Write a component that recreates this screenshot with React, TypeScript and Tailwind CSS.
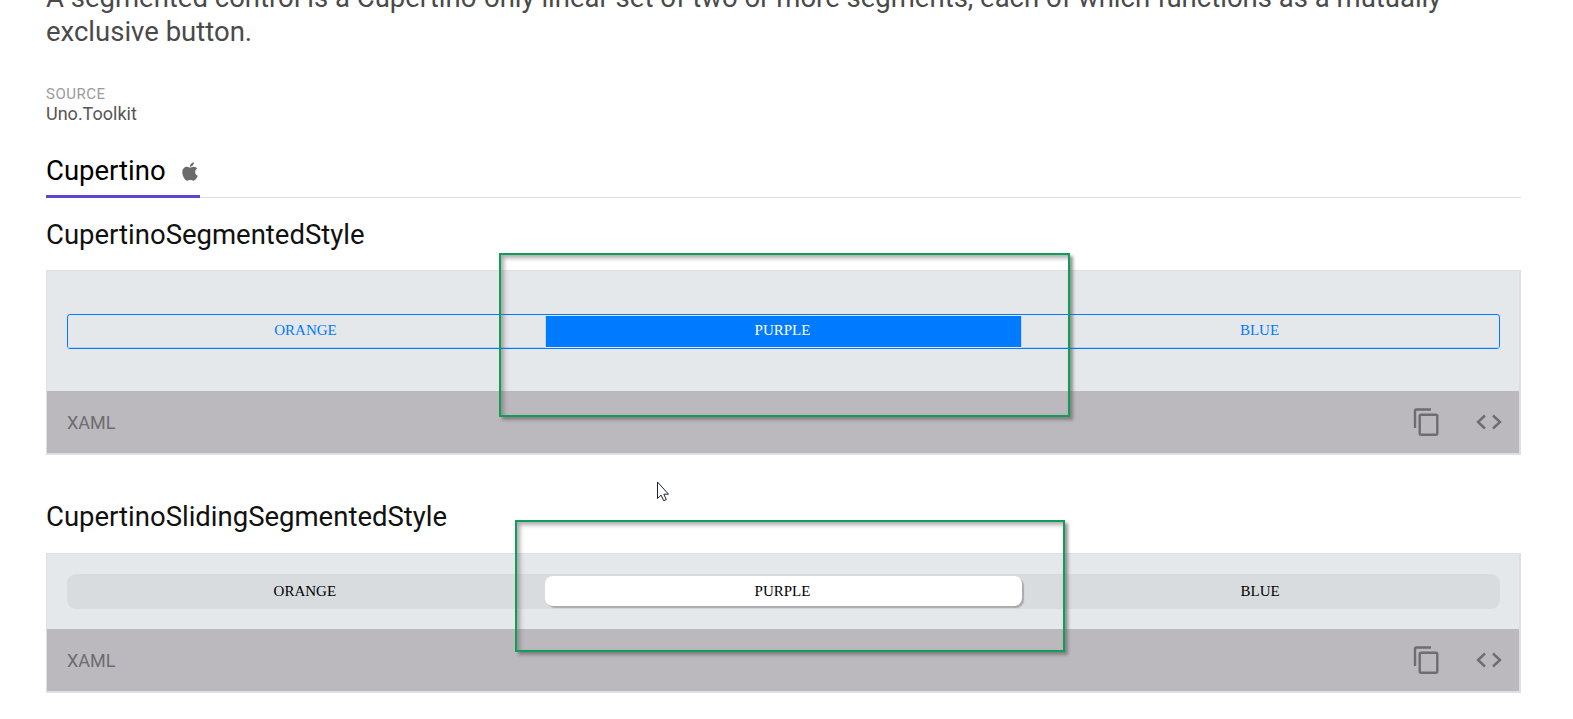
import { FaApple } from "react-icons/fa";

/* ── Types ── */

interface SampleCardProps {
  readonly variant: "segmented" | "sliding";
}

const SEGMENTS = ["ORANGE", "PURPLE", "BLUE"];

/* ── Icons ── */

function CopyIcon() {
  return (
    <svg width="26" height="28" viewBox="0 0 26 28" fill="none" stroke="#6e6b71" strokeWidth="2.4">
      <path d="M2 20V3a1.5 1.5 0 0 1 1.5-1.5H18" />
      <rect x="6.7" y="6.7" width="17.6" height="20" rx="1.5" />
    </svg>
  );
}

function CodeIcon() {
  return (
    <svg width="26" height="16" viewBox="0 0 26 16" fill="none" stroke="#6e6b71" strokeWidth="2.4">
      <path d="M9 1.5 2 8l7 6.5M17 1.5 24 8l-7 6.5" />
    </svg>
  );
}

function CursorIcon() {
  return (
    <svg width="14" height="21" viewBox="0 0 14 21" fill="#ffffff" stroke="#1f2430" strokeWidth="1">
      <path d="M1.5 1v16.5l3.6-3.4 2.6 5.6 2.6-1.1-2.5-5.4h4.7z" />
    </svg>
  );
}

/* ── Sample cards ── */

function SampleCard({ variant }: SampleCardProps) {
  const isSliding = variant === "sliding";

  return (
    <div className="border border-r-2 border-b-2 border-[#dddfe1]">
      <div className={isSliding ? "bg-[#e5e8eb] pt-5 pr-[19px] pb-5 pl-5" : "bg-[#e5e8eb] pt-[43px] pr-[19px] pb-[42px] pl-5"}>
        {isSliding ? (
          <div className="grid h-[35px] grid-cols-3 rounded-[9px] bg-[#d9dcdf] pt-[2px] font-['Liberation_Serif',serif] text-[15px] text-black">
            {SEGMENTS.map((segment) => (
              <div
                key={segment}
                className={
                  segment === "PURPLE"
                    ? "flex h-[30px] items-center justify-center rounded-[8px] bg-white pr-[2px] shadow-[2px_2px_1px_#a9abae]"
                    : "flex h-[30px] items-center justify-center pr-[2px]"
                }
              >
                {segment}
              </div>
            ))}
          </div>
        ) : (
          <div className="grid h-[35px] grid-cols-3 rounded-[3px] border border-[#007aff] font-['Liberation_Serif',serif] text-[15px] text-[#007aff]">
            {SEGMENTS.map((segment) => (
              <div
                key={segment}
                className={
                  segment === "PURPLE"
                    ? "my-px flex items-center justify-center border-x border-[#c3d4ea] bg-[#007aff] pr-[2px] pb-[2px] text-white"
                    : "flex items-center justify-center border-b border-[#b5d3f5] pr-[2px] pb-[2px]"
                }
              >
                {segment}
              </div>
            ))}
          </div>
        )}
      </div>
      <div className="flex h-[62px] items-center justify-between bg-[#bcb9be] pr-[17px] pl-5">
        <span className="text-[18px] text-[#6e6b71]">XAML</span>
        <div className="flex items-center gap-[37px]">
          <CopyIcon />
          <CodeIcon />
        </div>
      </div>
    </div>
  );
}

/* ── Page ── */

export default function App() {
  return (
    <div className="relative h-[719px] overflow-hidden bg-white pr-[52px] pl-[46px] font-['Roboto',sans-serif]">
      <p className="-mt-[19px] text-[27.5px] leading-[34px] text-[#4a4a4a]">
        A segmented control is a Cupertino-only linear set of two or more segments, each of which functions as a mutually exclusive button.
      </p>

      <div className="mt-[36px] text-[15px] leading-[18px] tracking-[0.5px] text-[#9b9b9b]">SOURCE</div>
      <div className="text-[18px] leading-[22px] text-[#555555]">Uno.Toolkit</div>

      {/* Tabs */}
      <div className="mt-[22px] border-b border-[#e0e0e0]">
        <div className="-mb-px flex h-[51px] w-[154px] items-center gap-[15px] border-b-[3px] border-[#5b48d0]">
          <span className="text-[27.5px] text-black">Cupertino</span>
          <FaApple className="h-[21px] w-[18px] text-[#6b6b6b]" />
        </div>
      </div>

      <h2 className="mt-[19px] mb-[17px] text-[27.5px] leading-[36px] font-normal text-[#111111]">CupertinoSegmentedStyle</h2>
      <SampleCard variant="segmented" />

      <h2 className="mt-[44px] mb-[18px] text-[27.5px] leading-[36px] font-normal text-[#111111]">CupertinoSlidingSegmentedStyle</h2>
      <SampleCard variant="sliding" />

      {/* Annotation boxes drawn over the screenshot */}
      <div className="absolute top-[253px] left-[499px] h-[164px] w-[571px] border-2 border-[#0f9d58] shadow-[3px_3px_3px_#666666aa,inset_3px_3px_4px_#66666688]" />
      <div className="absolute top-[520px] left-[515px] h-[132px] w-[550px] border-2 border-[#0f9d58] shadow-[3px_3px_3px_#666666aa,inset_3px_3px_4px_#66666688]" />
      <div className="absolute top-[481px] left-[656px]">
        <CursorIcon />
      </div>
    </div>
  );
}
